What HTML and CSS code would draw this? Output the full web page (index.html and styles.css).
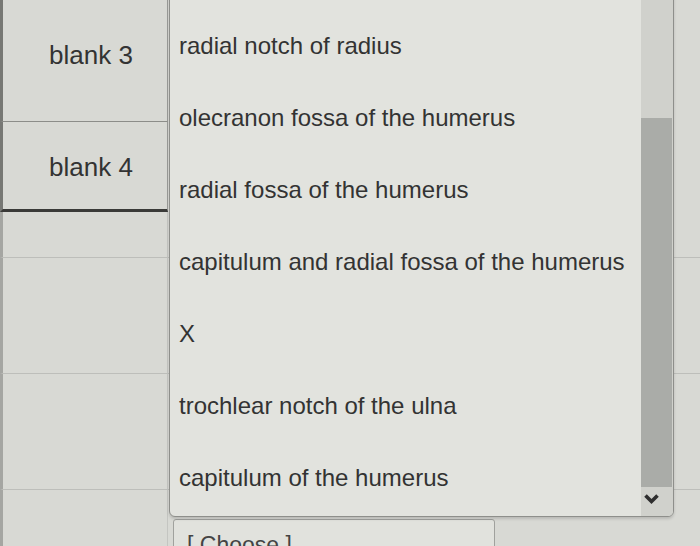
FILE: index.html
```html
<!DOCTYPE html>
<html lang="en">

<head>
    <meta charset="UTF-8">
    <title>Matching</title>
    <link rel="stylesheet" href="styles.css">
</head>

<body>
    <main class="page">
        <!-- 問題の表 -->
        <div class="table">
            <div class="row row1">
                <div class="label">blank 3</div>
                <div class="answer"></div>
            </div>
            <div class="row row2">
                <div class="label">blank 4</div>
                <div class="answer"></div>
            </div>
            <div class="row row3">
                <div class="label"></div>
                <div class="answer"></div>
            </div>
            <div class="row row4">
                <div class="label"></div>
                <div class="answer"></div>
            </div>
            <div class="row row5">
                <div class="label"></div>
                <div class="answer"></div>
            </div>
            <div class="row row6">
                <div class="label"></div>
                <div class="answer">
                    <div class="select">[ Choose ]</div>
                </div>
            </div>
        </div>

        <!-- 開いているドロップダウン -->
        <div class="dropdown">
            <ul class="options">
                <li>radial notch of radius</li>
                <li>olecranon fossa of the humerus</li>
                <li>radial fossa of the humerus</li>
                <li>capitulum and radial fossa of the humerus</li>
                <li>X</li>
                <li>trochlear notch of the ulna</li>
                <li>capitulum of the humerus</li>
            </ul>
            <div class="scrollbar">
                <div class="track"></div>
                <div class="thumb"></div>
                <div class="arrow">
                    <svg width="17" height="12" viewBox="0 0 17 12">
                        <polyline points="2.5,2.5 8.5,8.5 14.5,2.5" fill="none" stroke="#2E2E2E" stroke-width="3.6" />
                    </svg>
                </div>
            </div>
        </div>
    </main>
</body>

</html>
```

FILE: styles.css
```css
/* リセット */
body,
ul,
li,
div {
    margin: 0;
    padding: 0;
    box-sizing: border-box;
}

li {
    list-style: none;
}

/* レイアウト */
html,
body {
    height: 100%;
    overflow: hidden;
    font-family: 'Liberation Sans', Arial, sans-serif;
    color: #333333;
}

.page {
    position: relative;
    width: 700px;
    height: 546px;
    background-color: #D8D9D4;
    overflow: hidden;
}

/* 問題の表 */
.row {
    display: flex;
}

.label {
    flex-shrink: 0;
    width: 168px;
    padding-left: 46px;
    border-left: 3px solid #777874;
    border-right: 1px solid #9A9B97;
    font-size: 26px;
    line-height: 30px;
}

.answer {
    flex-grow: 1;
}

.row1 {
    height: 122px;
}

.row1>.label {
    padding-top: 40px;
    border-bottom: 1px solid #8C8D89;
}

.row2 {
    height: 90px;
}

.row2>.label {
    padding-top: 30px;
    border-bottom: 3px solid #3A3A38;
}

.row3 {
    height: 46px;
}

.row4,
.row5 {
    height: 116px;
}

.row6 {
    height: 60px;
}

.row3>div,
.row4>div,
.row5>div {
    border-bottom: 1px solid #BDBEBA;
}

.row3>.label,
.row4>.label,
.row5>.label,
.row6>.label {
    border-left-color: #A5A6A2;
    border-right-color: #C4C5C1;
}

.row6>.answer {
    padding: 29px 0 0 5px;
}

.select {
    width: 322px;
    height: 40px;
    padding: 12px 0 0 13px;
    border: 1px solid #A0A19D;
    border-radius: 3px;
    background-color: #E1E2DD;
    font-size: 23px;
    color: #444444;
}

/* ドロップダウン */
.dropdown {
    position: absolute;
    top: -4px;
    left: 169px;
    display: flex;
    width: 505px;
    height: 521px;
    border: 1px solid #8E8F8B;
    border-radius: 0 0 6px 6px;
    background-color: #E2E3DE;
    box-shadow: 0 2px 3px rgba(0, 0, 0, 0.15);
    overflow: hidden;
}

.options {
    flex-grow: 1;
    padding-top: 13px;
}

.options>li {
    height: 72px;
    padding-left: 9px;
    font-size: 24px;
    line-height: 72px;
}

.scrollbar {
    position: relative;
    flex-shrink: 0;
    width: 32px;
}

.track {
    height: 100%;
    background-color: #D0D1CC;
}

.thumb {
    position: absolute;
    top: 121px;
    left: 0;
    width: 31px;
    height: 369px;
    background-color: #AAACA8;
}

.arrow {
    position: absolute;
    top: 496px;
    left: 2px;
    display: flex;
}
```
